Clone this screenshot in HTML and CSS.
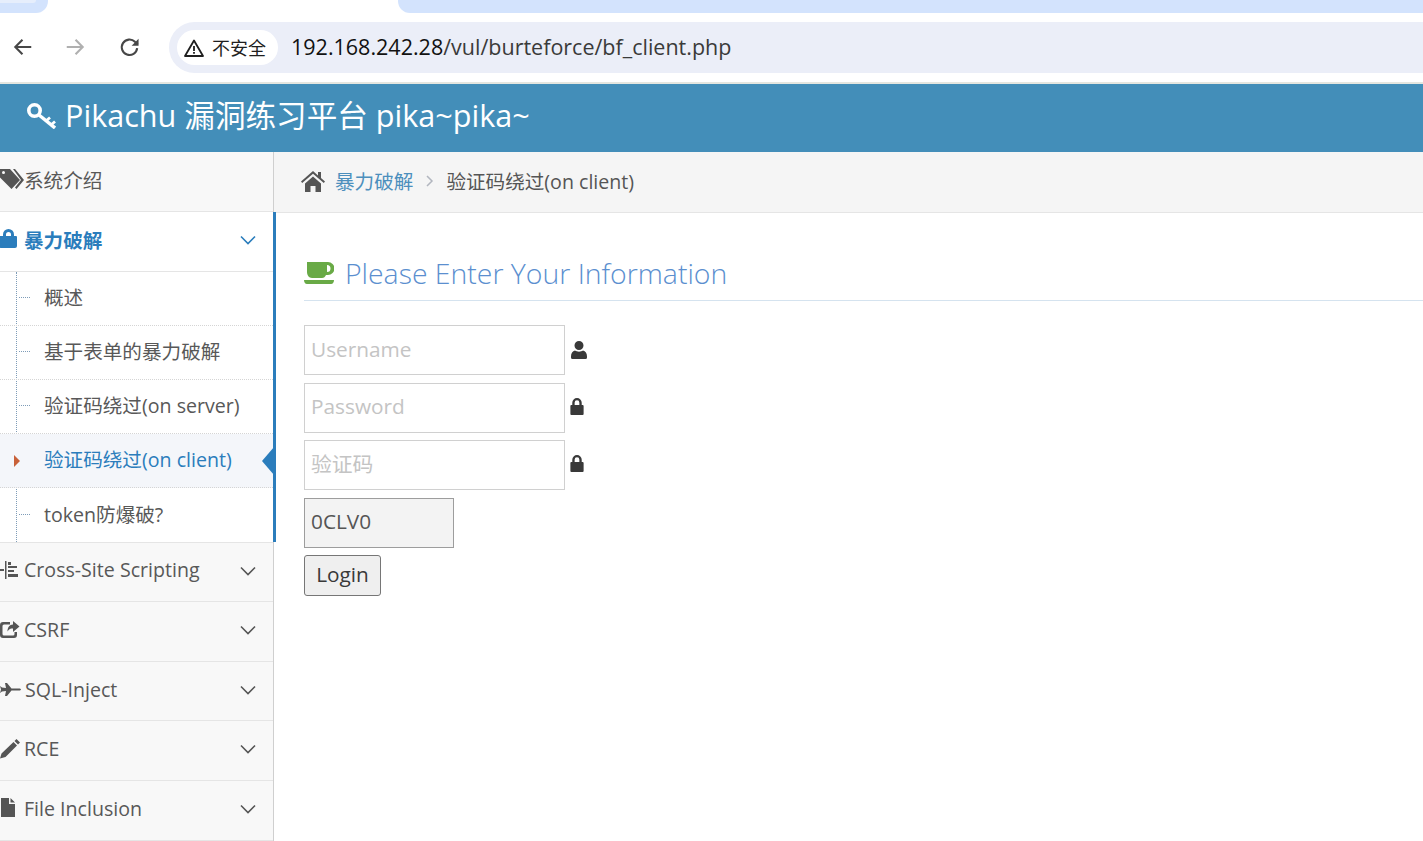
FILE: index.html
```html
<!DOCTYPE html>
<html lang="zh">
<head>
<meta charset="utf-8">
<title>Pikachu</title>
<link rel="stylesheet" href="styles.css">
</head>
<body>
<div class="tabstrip">
  <div class="tab-left"><div class="tab-left-inner"></div></div>
  <div class="tab-gap"></div>
  <div class="tab-right"></div>
</div>
<div class="toolbar">
  <svg class="navicon back" viewBox="0 0 20 20"><path d="M17.500 10H3.500M9.500 3.500 3 10l6.500 6.500" fill="none" stroke="#474747" stroke-width="1.900"/></svg>
  <svg class="navicon fwd" viewBox="0 0 20 20"><path d="M2.500 10h14M10.500 3.500 17 10l-6.500 6.500" fill="none" stroke="#b0b0b0" stroke-width="1.900"/></svg>
  <svg class="navicon reload" viewBox="0 0 20 20"><path d="M16.500 11a7 7 0 1 1-2-5.700L17 7.500" fill="none" stroke="#474747" stroke-width="1.900"/><path d="M17.800 2.500v6.300h-6.300z" fill="#474747"/></svg>
  <div class="omnibox">
    <div class="chip">
      <svg class="warn" viewBox="0 0 20 20"><path d="M10 2.500 19 18H1z" fill="none" stroke="#1f1f1f" stroke-width="1.800" stroke-linejoin="round"/><path d="M9.100 8h1.800v5H9.100zM9.100 14h1.800v1.800H9.100z" fill="#1f1f1f"/></svg>
      <span class="chip-text">不安全</span>
    </div>
    <span class="url">192.168.242.28<span class="url-path">/vul/burteforce/bf_client.php</span></span>
  </div>
</div>
<header class="navbar">
  <svg class="brand-key" viewBox="0 0 30 30"><g fill="none" stroke="#fff"><circle cx="8.500" cy="11.500" r="5.700" stroke-width="3.600"/><path d="M13 16 29 29" stroke-width="3.400"/><path d="M20 22l4-3.500M25 26l4-3.500" stroke-width="2.800"/></g></svg>
  <span class="brand">Pikachu 漏洞练习平台 pika~pika~</span>
</header>
<div class="main">
  <nav class="sidebar">
    <div class="row">
      <svg class="ico" viewBox="0 0 24 20"><path fill="#555" fill-rule="evenodd" d="M0 0h10l10 11-8.500 9L0 8.500zM3.500 2a1.500 1.500 0 1 0 0 3 1.500 1.500 0 0 0 0-3zM13 0h2l9 11-7.500 9-1.500-1.500 6-7.500z"/></svg>
      <span>系统介绍</span>
    </div>
    <div class="row open">
      <svg class="ico" viewBox="0 0 24 20"><path fill="#2b7dbc" fill-rule="evenodd" d="M3 7V5.500a5.500 5.500 0 0 1 11 0V7h2a1 1 0 0 1 1 1v9a2 2 0 0 1-2 2H1a2 2 0 0 1-2-2V8a1 1 0 0 1 1-1zM6 7h5V5.500a2.500 2.500 0 0 0-5 0z"/></svg>
      <span class="row-label">暴力破解</span>
      <svg class="chev" viewBox="0 0 16 10"><path d="M1 1.500 8 8.500l7-7" fill="none" stroke="#2b7dbc" stroke-width="1.600"/></svg>
    </div>
    <ul class="submenu">
      <li class="sub"><span>概述</span></li>
      <li class="sub"><span>基于表单的暴力破解</span></li>
      <li class="sub"><span>验证码绕过(on server)</span></li>
      <li class="sub active"><span>验证码绕过(on client)</span></li>
      <li class="sub last"><span>token防爆破?</span></li>
    </ul>
    <div class="row">
      <svg class="ico" viewBox="0 0 24 20"><path fill="#555" d="M0 9h4v2H0zM5 1h1.500v18H5zM8 2h3v3H8zM8 6h9v2H8zM8 10h6v2H8zM8 14h10v3H8z"/></svg>
      <span>Cross-Site Scripting</span>
      <svg class="chev" viewBox="0 0 16 10"><path d="M1 1.500 8 8.500l7-7" fill="none" stroke="#555" stroke-width="1.600"/></svg>
    </div>
    <div class="row">
      <svg class="ico" viewBox="0 0 24 20"><path fill="#555" d="M4 3h6v2.500H4a1.500 1.500 0 0 0-1.500 1.500v8A1.500 1.500 0 0 0 4 16.500h9a1.500 1.500 0 0 0 1.500-1.500v-2H17v3a3 3 0 0 1-3 3H3a3 3 0 0 1-3-3V6a3 3 0 0 1 3-3zM13 2l6.500 5.500L13 13V9.500c-2.500 0-4 .5-5.500 3 0-4 2-7 5.500-7z"/></svg>
      <span>CSRF</span>
      <svg class="chev" viewBox="0 0 16 10"><path d="M1 1.500 8 8.500l7-7" fill="none" stroke="#555" stroke-width="1.600"/></svg>
    </div>
    <div class="row">
      <svg class="ico" viewBox="0 0 24 20"><path fill="#555" d="M0 7l2 1.500 4 .5L5 4h2l4.500 5.500H19c1 0 2 .5 2 1s-1 1-2 1h-7.500L7 17H5l1-5-4 .5L0 14l1-3.500z"/></svg>
      <span class="sql">SQL-Inject</span>
      <svg class="chev" viewBox="0 0 16 10"><path d="M1 1.500 8 8.500l7-7" fill="none" stroke="#555" stroke-width="1.600"/></svg>
    </div>
    <div class="row">
      <svg class="ico" viewBox="0 0 24 20"><path fill="#555" d="M16.500 0 20 3.500l-2 2L14.500 2zM13.500 3 17 6.500 5.500 18 0 19.500 1.500 14.500z"/></svg>
      <span>RCE</span>
      <svg class="chev" viewBox="0 0 16 10"><path d="M1 1.500 8 8.500l7-7" fill="none" stroke="#555" stroke-width="1.600"/></svg>
    </div>
    <div class="row">
      <svg class="ico" viewBox="0 0 24 20"><path fill="#555" d="M1 0h8v6h6v13H1zM10.500 0 15 4.500h-4.500z"/></svg>
      <span>File Inclusion</span>
      <svg class="chev" viewBox="0 0 16 10"><path d="M1 1.500 8 8.500l7-7" fill="none" stroke="#555" stroke-width="1.600"/></svg>
    </div>
  </nav>
  <main class="content">
    <div class="breadcrumbs">
      <svg class="home" viewBox="0 0 26 22"><path fill="#555" d="M13 1 1 11.500l1.200 1.500L13 3.800 23.800 13l1.200-1.500-4-3.500V2h-3v3.400zM5 13.500 13 6.500l8 7V22h-5.500v-6h-5v6H5z"/></svg>
      <a class="crumb">暴力破解</a>
      <svg class="crumb-sep" viewBox="0 0 8 12"><path d="M1 1l5 5-5 5" fill="none" stroke="#b2b6bf" stroke-width="1.500"/></svg>
      <span>验证码绕过(on client)</span>
    </div>
    <div class="page">
      <h1 class="title">
        <svg class="cup" viewBox="0 0 30 24"><path fill="#69aa46" fill-rule="evenodd" d="M3 1h21a5.500 5.500 0 0 1 0 13h-2c-1 2-2 3-4 3H8c-3 0-5-3-5-6zM23 4v7a3.500 3.500 0 0 0 0-7zM0 19h30c0 2-1 4-3 4H3c-2 0-3-2-3-4z"/></svg>
        <span>Please Enter Your Information</span>
      </h1>
      <form class="form">
        <div class="field">
          <input class="input" type="text" placeholder="Username">
          <svg class="fico" viewBox="0 0 16 18"><path fill="#393939" d="M8 0a4.500 4.500 0 1 1 0 9 4.500 4.500 0 0 1 0-9zM4 9.500c2 1.500 6 1.500 8 0 2.500.5 4 3 4 6v1a1.500 1.500 0 0 1-1.500 1.500h-13A1.500 1.500 0 0 1 0 16.500v-1c0-3 1.500-5.500 4-6z"/></svg>
        </div>
        <div class="field">
          <input class="input pw" type="password" placeholder="Password">
          <svg class="fico lock" viewBox="0 0 14 18"><path fill="#393939" fill-rule="evenodd" d="M2 7.500V5a5 5 0 0 1 10 0v2.500h1a1 1 0 0 1 1 1V17a1 1 0 0 1-1 1H1a1 1 0 0 1-1-1V8.500a1 1 0 0 1 1-1zM4.500 7.500h5V5a2.500 2.500 0 0 0-5 0z"/></svg>
        </div>
        <div class="field">
          <input class="input" type="text" placeholder="验证码">
          <svg class="fico lock" viewBox="0 0 14 18"><path fill="#393939" fill-rule="evenodd" d="M2 7.500V5a5 5 0 0 1 10 0v2.500h1a1 1 0 0 1 1 1V17a1 1 0 0 1-1 1H1a1 1 0 0 1-1-1V8.500a1 1 0 0 1 1-1zM4.500 7.500h5V5a2.500 2.500 0 0 0-5 0z"/></svg>
        </div>
        <input class="code" type="text" value="0CLV0" readonly>
        <button class="login" type="button">Login</button>
      </form>
    </div>
  </main>
</div>
</body>
</html>
```
FILE: styles.css
```css
* { box-sizing: border-box; }
html, body { margin: 0; padding: 0; height: 841px; overflow: hidden; background: #fff; }
body { font-family: "Open Sans", "Noto Sans CJK SC", sans-serif; font-size: 19.600px; color: #393939; }

.tabstrip { display: flex; height: 13px; background: #fff; }
.tab-left { width: 48px; background: #d3e3fd; border-bottom-right-radius: 12px; }
.tab-left-inner { width: 36px; height: 3px; background: #e6eefc; border-bottom-right-radius: 6px; }
.tab-gap { width: 350px; }
.tab-right { flex: 1; background: #d3e3fd; border-bottom-left-radius: 12px; }

.toolbar { display: flex; align-items: center; height: 71px; padding: 0 0 0 12px; background: #fff; border-bottom: 2px solid #e4e6e0; }
.navicon { width: 22px; height: 22px; flex: none; margin-top: -1px; }
.fwd { margin-left: 30px; }
.reload { margin-left: 33px; }
.omnibox { display: flex; align-items: center; margin-left: 28px; flex: 1; height: 51px; padding-left: 8px; background: #ebeef8; border-radius: 26px 0 0 26px; }
.chip { display: flex; align-items: center; gap: 8px; width: 101px; height: 35px; padding-left: 7px; background: #fff; border-radius: 18px; font-size: 18px; color: #1f1f1f; white-space: nowrap; }
.chip-text { margin-top: -2px; }
.warn { width: 20px; height: 20px; flex: none; }
.url { margin: -2px 0 0 13px; font-size: 21.500px; color: #111; white-space: nowrap; }
.url-path { color: #3a3a3a; }

.navbar { display: flex; align-items: center; height: 68px; padding: 0 0 8px 26px; background: #438eb9; color: #fff; }
.brand-key { width: 30px; height: 30px; flex: none; }
.brand { margin-left: 9px; font-size: 30.600px; white-space: nowrap; }

.main { display: flex; height: 689px; }
.sidebar { width: 274px; flex: none; background: #f8f8f8; border-right: 1px solid #cfcfcf; color: #585858; }
.row { display: flex; align-items: center; height: 59.600px; padding-bottom: 4px; border-bottom: 1px solid #e5e5e5; position: relative; white-space: nowrap; }
.ico { width: 24px; height: 20px; flex: none; overflow: hidden; }
.chev { position: absolute; left: 240px; top: 23px; width: 16px; height: 10px; }
.sql { margin-left: 1px; }
.open { background: #fff; color: #2b7dbc; font-weight: 700; height: 60px; }
.open::after { content: ""; position: absolute; top: 0; right: -3px; width: 3px; height: 60px; background: #2b7dbc; }

.submenu { position: relative; list-style: none; margin: 0; padding: 0; height: 271px; background: #fff; border-bottom: 1px solid #e5e5e5; }
.submenu::before { content: ""; position: absolute; top: 0; left: 16px; bottom: 0; border-left: 1px dotted #7e9cb8; }
.submenu::after { content: ""; position: absolute; top: -1px; right: -3px; bottom: 0; width: 3px; background: #2b7dbc; }
.sub { position: relative; display: flex; align-items: center; height: 54.200px; padding: 0 0 4px 44px; border-bottom: 1px dotted #d5d5d5; color: #585858; white-space: nowrap; }
.sub::before { content: ""; position: absolute; left: 19px; top: 48%; width: 11px; border-top: 1px dotted #7e9cb8; }
.last { border-bottom: 0; }
.active { background: #f4f6fa; color: #2b7dbc; }
.active::before { left: 14px; top: 50%; width: 0; margin-top: -6px; border-top: 6px solid transparent; border-bottom: 6px solid transparent; border-left: 6px solid #c86139; }
.active::after { content: ""; position: absolute; top: 50%; right: -1px; margin-top: -14px; border-top: 14px solid transparent; border-bottom: 14px solid transparent; border-right: 12px solid #2b7dbc; }

.content { flex: 1; min-width: 0; }
.breadcrumbs { display: flex; align-items: center; height: 61px; padding: 0 0 4px 26px; background: #f5f5f5; border-bottom: 1px solid #e5e5e5; color: #555; white-space: nowrap; }
.home { width: 26px; height: 22px; flex: none; margin-top: 2px; }
.crumb { margin-left: 9px; color: #4c8fbd; }
.crumb-sep { width: 8px; height: 12px; margin: 2px 12px 0 13px; flex: none; }
.page { padding-left: 30px; }
.title { display: flex; align-items: center; height: 59px; margin: 29px 0 24px; padding-top: 4px; border-bottom: 1px solid #d5e3ef; font-size: 28.400px; font-weight: 300; color: #5b8fcf; white-space: nowrap; }
.cup { width: 30px; height: 24px; flex: none; margin-right: 11px; }
.form { display: flex; flex-direction: column; align-items: flex-start; }
.field { display: flex; align-items: center; height: 50px; margin-bottom: 7.500px; }
.input { width: 261px; height: 50px; padding: 0 6px 2px; border: 1px solid #d0d0d0; background: #fff; border-radius: 0; font: inherit; font-size: 20.800px; color: #393939; outline: none; }
.pw { padding-bottom: 4px; }
.input::placeholder { color: #c4c4c4; opacity: 1; }
.fico { width: 16px; height: 18px; margin-left: 6px; flex: none; }
.lock { width: 14px; height: 17px; margin-left: 5px; margin-top: -3px; }
.code { width: 150px; height: 50px; padding: 0 6px 4px; border: 1px solid #9d9d9d; background: #f3f3f3; border-radius: 0; font: inherit; font-size: 20.800px; color: #555; outline: none; }
.login { width: 77px; height: 41px; margin-top: 7px; padding: 0 0 2px; border: 1px solid #767676; border-radius: 3px; background: #efefef; font: inherit; font-size: 20.800px; color: #393939; }
```
